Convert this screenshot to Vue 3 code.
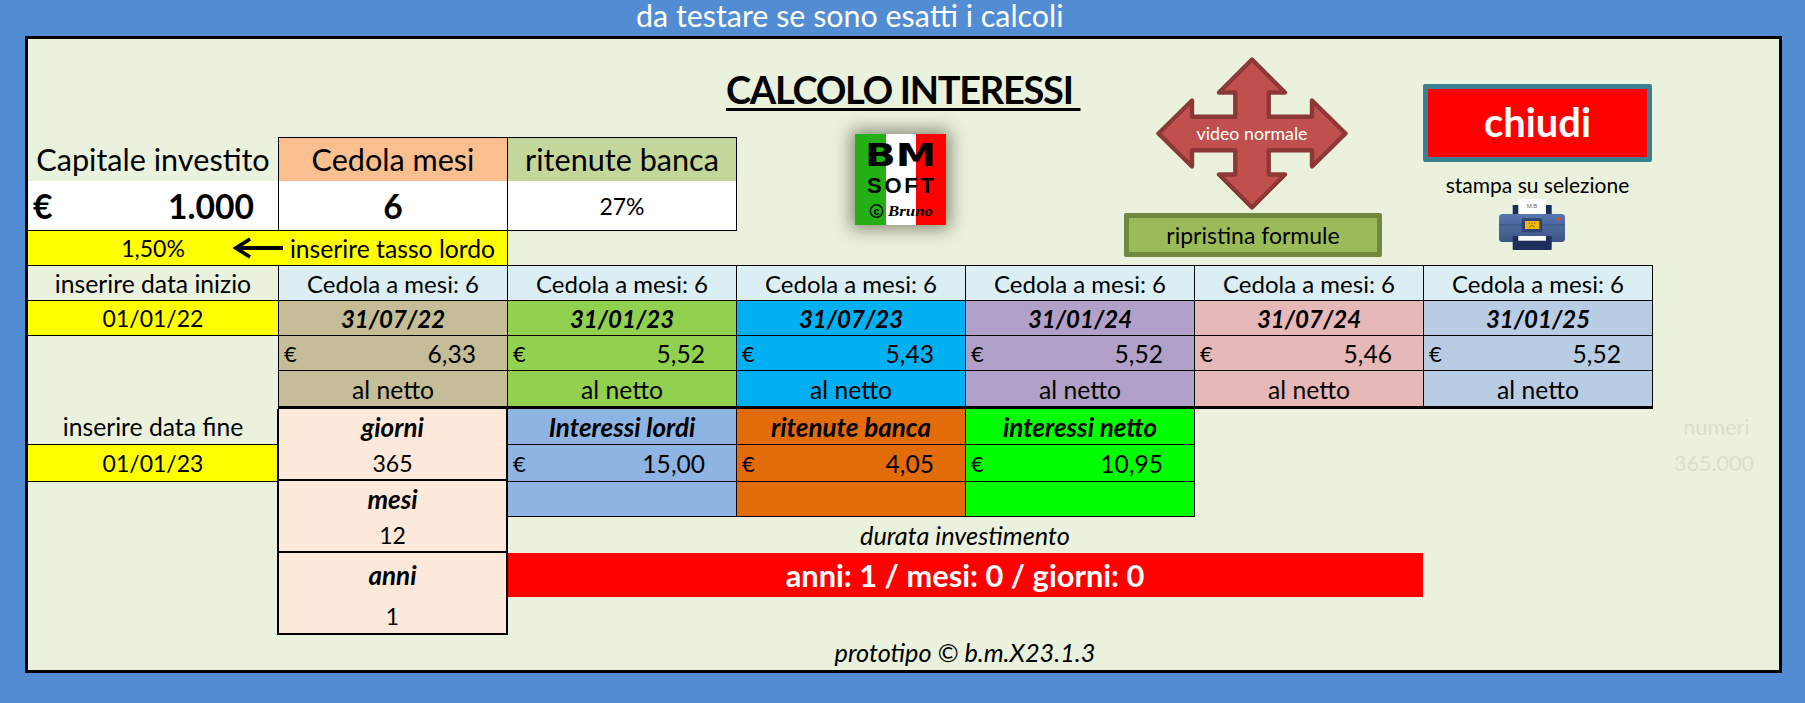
<script setup>
const cols = [
  { bg: '#C4BD97', date: '31/07/22', val: '6,33' },
  { bg: '#92D050', date: '31/01/23', val: '5,52' },
  { bg: '#00B0F0', date: '31/07/23', val: '5,43' },
  { bg: '#B1A0C7', date: '31/01/24', val: '5,52' },
  { bg: '#E6B8B7', date: '31/07/24', val: '5,46' },
  { bg: '#B8CCE4', date: '31/01/25', val: '5,52' }
]
const totals = [
  { bg: '#8DB4E2', head: 'Interessi lordi', val: '15,00' },
  { bg: '#E26B0A', head: 'ritenute banca', val: '4,05' },
  { bg: '#00FF00', head: 'interessi netto', val: '10,95' }
]
</script>

<template>
  <div class="page">
    <div class="top">da testare se sono esatti i calcoli</div>
    <div class="panel">
      <div class="sheet">
        <h1 class="title">CALCOLO INTERESSI&nbsp;</h1>

        <div class="shapes">
          <div class="logo">
            <svg class="logo-art" viewBox="0 0 91 91" width="91" height="91">
              <rect x="0" y="0" width="31" height="91" fill="#22B014" />
              <rect x="31" y="0" width="30" height="91" fill="#FFFFFF" />
              <rect x="61" y="0" width="30" height="91" fill="#FF0000" />
              <text x="10" y="32" class="l-bm" textLength="71" lengthAdjust="spacingAndGlyphs">BM</text>
              <text x="12" y="59" class="l-soft" textLength="67" lengthAdjust="spacing">SOFT</text>
              <circle cx="21.5" cy="77" r="6.2" fill="none" stroke="#111" stroke-width="1.5" />
              <text x="21.5" y="80.5" class="l-c" text-anchor="middle">c</text>
              <text x="33" y="82" class="l-br" textLength="45" lengthAdjust="spacingAndGlyphs">Bruno</text>
            </svg>
          </div>

          <div class="mid">
            <svg class="move" viewBox="-96 -76.5 192 153" width="192" height="153">
              <path class="move-path" d="M0,-74 L33,-41 L16.7,-41 L16.7,-16.7 L60,-16.7 L60,-33 L93.5,0 L60,33 L60,16.7 L16.7,16.7 L16.7,41 L33,41 L0,74 L-33,41 L-16.7,41 L-16.7,16.7 L-60,16.7 L-60,33 L-93.5,0 L-60,-33 L-60,-16.7 L-16.7,-16.7 L-16.7,-41 L-33,-41 Z" />
              <text class="move-text" x="0" y="6" text-anchor="middle">video normale</text>
            </svg>
            <div class="restore">ripristina formule</div>
          </div>

          <div class="right">
            <div class="close">chiudi</div>
            <div class="print-label">stampa su selezione</div>
            <svg class="printer" viewBox="0 0 66 51" width="66" height="51">
              <defs>
                <linearGradient id="pb" x1="0" y1="0" x2="0" y2="1">
                  <stop offset="0" stop-color="#5676AF" />
                  <stop offset="1" stop-color="#3C5583" />
                </linearGradient>
              </defs>
              <rect x="13.7" y="6" width="39" height="10" fill="#1C2F5B" />
              <rect x="19.3" y="0" width="27.7" height="15" fill="#FFFFFF" />
              <text x="33" y="8.5" class="p-mb" text-anchor="middle">M.B</text>
              <rect x="0" y="15" width="66" height="28" rx="3.5" fill="url(#pb)" />
              <line x1="0" y1="26" x2="66" y2="26" stroke="#3A507E" stroke-width="1" />
              <rect x="22.7" y="19.3" width="20.6" height="14" rx="2" fill="#2F4470" />
              <rect x="26" y="22" width="14.3" height="8" fill="#F5B800" />
              <path d="M29.5 24.2h1.5M35 24.2h1.5M30 28l3-1.6 3 1.6M33 23.5v1.5" fill="none" stroke="#6B5200" stroke-width=".7" />
              <circle cx="60" cy="20" r="2" fill="#C8503C" />
              <rect x="13.7" y="37" width="39" height="14" rx="1" fill="#1C2F5B" />
              <rect x="19.3" y="37" width="27.7" height="4.7" fill="#FFFFFF" />
            </svg>
          </div>
        </div>

        <div class="cell big r2 c1 plain">Capitale investito</div>
        <div class="c big r2 c2 hd head-orange">Cedola mesi</div>
        <div class="c big r2 c3 hd head-green">ritenute banca</div>

        <div class="c r3 c1 white nl nt money big-b capital"><span>€</span><span>1.000</span></div>
        <div class="c r3 c2 white nt big-b">6</div>
        <div class="c r3 c3 white nt num">27%</div>

        <div class="c r4 yellow nl rate">
          <span class="num">1,50%</span>
          <span class="wider">inserire tasso lordo</span>
          <svg class="arrow" viewBox="0 0 52 24" width="52" height="24">
            <path d="M51 12H4" stroke="#000" stroke-width="3.8" fill="none" />
            <path d="M18 3 L4 12 L18 21" stroke="#000" stroke-width="3.8" fill="none" />
          </svg>
        </div>

        <div class="cell r5 c1 wider start-label">inserire data inizio</div>
        <div class="c r6 c1 yellow nl num">01/01/22</div>

        <template v-for="(col, i) in cols" :key="col.date">
          <div class="c r5 light" :style="{ gridColumn: i + 2 }">Cedola a mesi: 6</div>
          <div class="c r6 date" :style="{ gridColumn: i + 2, background: col.bg }">{{ col.date }}</div>
          <div class="c r7 money" :style="{ gridColumn: i + 2, background: col.bg }"><span class="eur">€</span><span>{{ col.val }}</span></div>
          <div class="c r8 thick wider" :style="{ gridColumn: i + 2, background: col.bg }">al netto</div>
        </template>

        <div class="cell r9 c1 wider">inserire data fine</div>
        <div class="c r10 c1 yellow nl num">01/01/23</div>

        <div class="peach r9-10 c2"><b>giorni</b><span>365</span></div>
        <div class="peach r11-12 c2"><b>mesi</b><span>12</span></div>
        <div class="peach r13-14 c2 last"><b>anni</b><span>1</span></div>

        <template v-for="(t, i) in totals" :key="t.head">
          <div class="c r9 date head nt" :style="{ gridColumn: i + 3, background: t.bg }">{{ t.head }}</div>
          <div class="c r10 money" :style="{ gridColumn: i + 3, background: t.bg }"><span class="eur">€</span><span>{{ t.val }}</span></div>
          <div class="c r11" :style="{ gridColumn: i + 3, background: t.bg }"></div>
        </template>

        <div class="cell r12 wide italic">durata investimento</div>
        <div class="cell r13 wide bar">anni: 1 / mesi: 0 / giorni: 0</div>
        <div class="cell r15 wide italic">prototipo © b.m.X23.1.3</div>

        <div class="cell r9 c8 faint f-label">numeri</div>
        <div class="cell r10 c8 faint f-value">365.000</div>
      </div>
    </div>
  </div>
</template>

<style>
html, body { margin: 0; padding: 0; background: #528CD3; }
</style>

<style scoped>
.page {
  width: 1805px;
  height: 703px;
  background: #528CD3;
  font-family: Lato, "Open Sans", sans-serif;
  color: #000;
}
.top {
  height: 36px;
  padding-left: 636px;
  box-sizing: border-box;
  color: #fff;
  font-size: 30.4px;
  line-height: 31px;
}
.panel {
  width: 1757px;
  height: 637px;
  margin-left: 25px;
  box-sizing: border-box;
  border: 3px solid #000;
  background: #EAF1DC;
}
.sheet {
  display: grid;
  grid-template-columns: 250px repeat(6, 229px) 127px;
  grid-template-rows: 98px 44px 49px 35px 35px 35px 35px 39px 35px 37px 35px 37px 44px 37px 36px;
  font-size: 24px;
}
.c, .cell {
  display: flex;
  align-items: center;
  justify-content: center;
  white-space: nowrap;
  min-width: 0;
}
.c {
  box-sizing: border-box;
  border: 1px solid #000;
  margin: 0 -1px -1px 0;
}
.nl { border-left: 0; }
.nt { border-top: 0; }
.c1 { grid-column: 1; }
.c2 { grid-column: 2; }
.c3 { grid-column: 3; }
.c8 { grid-column: 8; }
.r2 { grid-row: 2; }
.r3 { grid-row: 3; }
.r4 { grid-row: 4; }
.r5 { grid-row: 5; }
.r6 { grid-row: 6; }
.r7 { grid-row: 7; }
.r8 { grid-row: 8; }
.r9 { grid-row: 9; }
.r10 { grid-row: 10; }
.r11 { grid-row: 11; }
.r12 { grid-row: 12; }
.r13 { grid-row: 13; }
.r15 { grid-row: 15; }
.r9-10 { grid-row: 9 / span 2; }
.r11-12 { grid-row: 11 / span 2; }
.r13-14 { grid-row: 13 / span 2; }
.big { font-size: 30.6px; }
.big-b { font-size: 33.6px; font-weight: 700; padding-top: 1px; }
.num { font-size: 23px; }
.wider { font-size: 24.7px; }
.start-label { padding-top: 2px; }
.hd { border-bottom: 0; margin-bottom: 0; }
.head-orange { background: #FABF8F; }
.head-green { background: #C4D79B; }
.white { background: #fff; }
.yellow { background: #FFFF00; }
.light { background: #DAEEF3; }
.date { font-weight: 700; font-style: italic; }
.head { font-size: 26px; }
.money {
  justify-content: space-between;
  padding: 0 31px 0 5px;
  font-size: 24.6px;
}
.capital { padding: 1px 24px 0 5px; font-size: 33.6px; }
.eur { font-size: 22px; }
.thick {
  border-bottom: 3px solid #000;
  margin-bottom: 0;
  padding-top: 1px;
}
.rate {
  grid-column: 1 / 3;
  display: grid;
  grid-template-columns: 250px 229px;
  justify-items: center;
  position: relative;
}
.arrow {
  position: absolute;
  left: 204px;
  top: 5px;
}
.peach {
  display: grid;
  grid-template-rows: subgrid;
  background: #FDE9D9;
  box-sizing: border-box;
  border: 2px solid #000;
  border-top: 0;
  margin: 0 -1px 0 -1px;
  justify-items: center;
  align-items: center;
  z-index: 1;
}
.peach.last { margin-bottom: -1px; }
.peach b { font-weight: 700; font-style: italic; font-size: 26px; }
.peach span { font-size: 23px; padding-top: 2px; }
.wide { grid-column: 3 / 7; }
.italic { font-style: italic; font-size: 25.3px; }
.bar {
  background: #FF0000;
  color: #fff;
  font-weight: 700;
  font-size: 30.8px;
}
.faint { color: #DEDDCB; font-size: 21.6px; }
.f-label { padding-left: 2px; }
.f-value { padding-right: 3px; }

.title {
  grid-column: 3 / 6;
  grid-row: 1;
  justify-self: start;
  align-self: start;
  margin: 29px 0 0 219px;
  font-size: 38px;
  font-weight: 700;
  letter-spacing: -1.3px;
  line-height: 42px;
  text-decoration: underline;
  text-decoration-thickness: 3px;
  text-underline-offset: 4px;
  white-space: nowrap;
}
.shapes {
  grid-column: 4 / 8;
  grid-row: 1 / 5;
  display: flex;
  align-items: flex-start;
  pointer-events: none;
}
.logo {
  margin: 95px 0 0 119px;
  width: 91px;
  height: 91px;
  box-shadow: 0 0 16px 4px rgba(70, 70, 50, 0.6);
  flex: none;
}
.logo-art { display: block; }
.l-bm { font-family: "DejaVu Sans", sans-serif; font-weight: 700; font-size: 31.5px; }
.l-soft { font-family: "Liberation Sans", sans-serif; font-weight: 700; font-size: 22px; }
.l-c { font-family: "Liberation Sans", sans-serif; font-weight: 700; font-size: 10px; }
.l-br { font-family: "Liberation Serif", serif; font-style: italic; font-weight: 700; font-size: 15px; }
.mid {
  margin: 18px 0 0 178px;
  width: 258px;
  flex: none;
  display: flex;
  flex-direction: column;
  align-items: center;
}
.move { display: block; margin-right: 2px; }
.move-path {
  fill: #C0504D;
  stroke: #8C3836;
  stroke-width: 4.4;
  stroke-linejoin: round;
}
.move-text {
  fill: #fff;
  font-family: Lato, sans-serif;
  font-size: 17.8px;
}
.restore {
  box-sizing: border-box;
  width: 258px;
  height: 44px;
  margin-top: 3px;
  border: 5px solid #71893F;
  border-radius: 2px;
  background: #9BBB59;
  font-size: 23px;
  display: flex;
  align-items: center;
  justify-content: center;
}
.right {
  margin: 45px 0 0 41px;
  width: 229px;
  flex: none;
  display: flex;
  flex-direction: column;
  align-items: center;
}
.close {
  box-sizing: border-box;
  width: 229px;
  height: 78px;
  border: 5px solid #3A7F92;
  border-radius: 2px;
  background: #FF0000;
  color: #fff;
  font-size: 39.9px;
  font-weight: 700;
  padding-bottom: 4px;
  display: flex;
  align-items: center;
  justify-content: center;
}
.print-label {
  font-size: 21px;
  line-height: 24px;
  margin-top: 11px;
}
.printer {
  display: block;
  margin: 2px 11px 0 0;
}
.p-mb {
  font-family: "Liberation Sans", sans-serif;
  font-size: 6px;
  fill: #666;
}
</style>
